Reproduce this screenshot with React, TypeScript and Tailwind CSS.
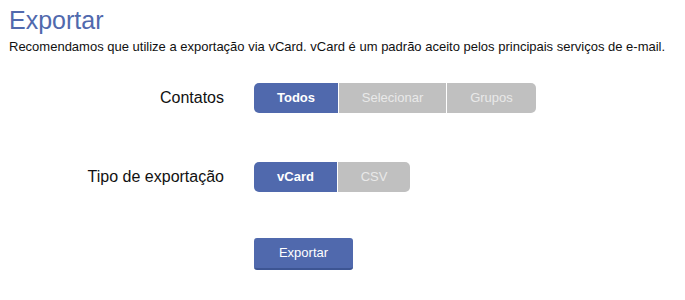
import { useState } from 'react';

const font = { fontFamily: '"Liberation Sans", Arial, sans-serif' };

function Segmented({
  options,
  widths,
  value,
  onChange,
}: {
  options: string[];
  widths: string[];
  value: string;
  onChange: (v: string) => void;
}) {
  return (
    <div className="flex gap-px">
      {options.map((opt, i) => {
        const active = opt === value;
        const first = i === 0;
        const last = i === options.length - 1;
        return (
          <button
            key={opt}
            onClick={() => onChange(opt)}
            className={`h-[30px] text-[13px] ${widths[i]} ${first ? 'rounded-l-[5px]' : ''} ${
              last ? 'rounded-r-[5px]' : ''
            } ${active ? 'bg-[#5069ad] text-white font-bold' : 'bg-[#c0c0c0] text-[#e9e9e9]'}`}
          >
            {opt}
          </button>
        );
      })}
    </div>
  );
}

export default function App() {
  const [contatos, setContatos] = useState('Todos');
  const [tipo, setTipo] = useState('vCard');

  return (
    <div className="w-[685px] h-[300px] bg-white text-[#111]" style={font}>
      <h1 className="pl-[9px] pt-[5px] text-[25px] leading-[30px] text-[#5069ad]">Exportar</h1>
      <p className="pl-[9px] pt-[4px] text-[13px] leading-[16px]">
        Recomendamos que utilize a exportação via vCard. vCard é um padrão aceito pelos principais serviços de e-mail.
      </p>

      <div className="mt-[28px] grid grid-cols-[224px_auto] gap-x-[30px] items-center">
        <div className="text-right text-[16px]">Contatos</div>
        <Segmented
          options={['Todos', 'Selecionar', 'Grupos']}
          widths={['w-[84px]', 'w-[107px]', 'w-[89px]']}
          value={contatos}
          onChange={setContatos}
        />
        <div className="h-[49px] col-span-2" />
        <div className="text-right text-[16px]">Tipo de exportação</div>
        <Segmented
          options={['vCard', 'CSV']}
          widths={['w-[83px]', 'w-[72px]']}
          value={tipo}
          onChange={setTipo}
        />
        <div className="h-[46px] col-span-2" />
        <div />
        <div>
          <button className="w-[99px] h-[32px] rounded-[3px] bg-[#5069ad] border-b-2 border-[#3d5593] text-white text-[13px]">
            Exportar
          </button>
        </div>
      </div>
    </div>
  );
}
